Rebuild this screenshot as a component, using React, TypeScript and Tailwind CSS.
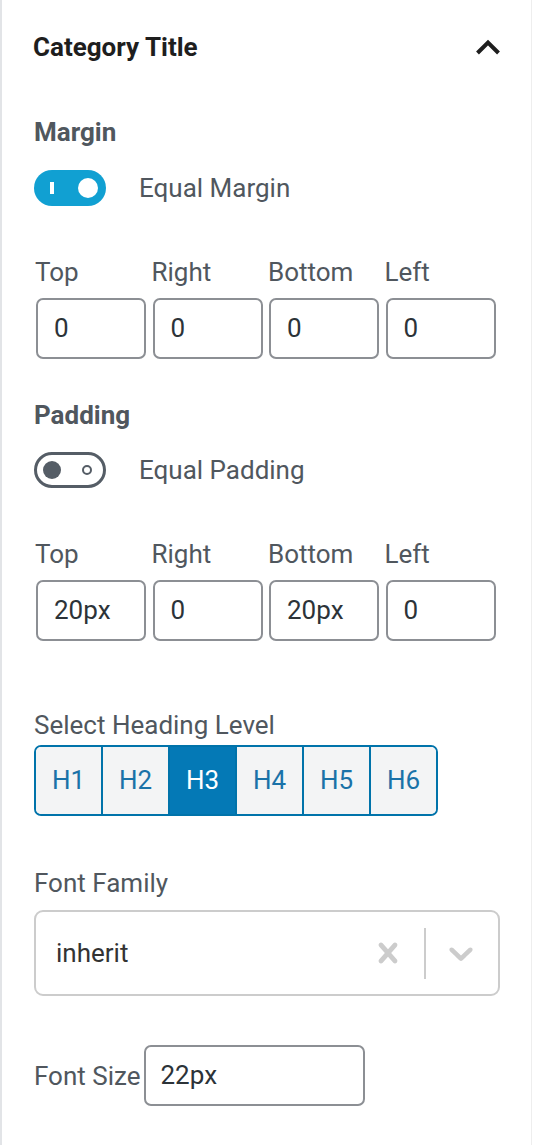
import React from "react";

const font = { fontFamily: "Roboto, 'Liberation Sans', sans-serif" };

function Field({ value }: { value: string }) {
  return (
    <div className="w-[110px] h-[61px] border-2 border-[#8c8f94] rounded-[7px] flex items-center pl-[16px] text-[26px] text-[#2c3338]">
      {value}
    </div>
  );
}

function Sides({ values }: { values: string[] }) {
  const labels = ["Top", "Right", "Bottom", "Left"];
  return (
    <div className="flex gap-[6.5px] pl-[2px]">
      {labels.map((l, i) => (
        <div key={l} className="flex flex-col">
          <div className="h-[32px] leading-[32px] text-[26px] text-[#50575e] -ml-[1px]">{l}</div>
          <div className="mt-[10px]">
            <Field value={values[i]} />
          </div>
        </div>
      ))}
    </div>
  );
}

export default function App() {
  const levels = ["H1", "H2", "H3", "H4", "H5", "H6"];
  return (
    <div style={font} className="w-[534px] h-[1145px] bg-white flex">
      <div className="w-[2px] bg-[#e2e4e7]" />
      <div className="w-[529px] pl-[32px] pr-[31px] flex flex-col">
        {/* Title */}
        <div className="mt-[31px] h-[32px] flex items-center justify-between">
          <div className="text-[26px] leading-[32px] font-bold text-[#1e1e1e] -ml-[1px]">Category Title</div>
          <svg width="26" height="18" viewBox="0 0 26 18" className="-mr-[1px]">
            <polyline points="2.5,15 13,4.5 23.5,15" fill="none" stroke="#1e1e1e" strokeWidth="4" />
          </svg>
        </div>

        {/* Margin */}
        <div className="mt-[53px] h-[32px] leading-[32px] text-[26px] font-bold text-[#50575e]">Margin</div>
        <div className="mt-[22px] flex items-center h-[36px]">
          <div className="relative w-[72px] h-[36px] rounded-full bg-[#11a0d2]">
            <div className="absolute left-[16px] top-[12px] w-[4px] h-[12px] bg-white" />
            <div className="absolute left-[44px] top-[8px] w-[20px] h-[20px] rounded-full bg-white" />
          </div>
          <div className="ml-[33px] text-[26px] leading-[32px] text-[#50575e]">Equal Margin</div>
        </div>

        <div className="mt-[50px]">
          <Sides values={["0", "0", "0", "0"]} />
        </div>

        {/* Padding */}
        <div className="mt-[40px] h-[32px] leading-[32px] text-[26px] font-bold text-[#50575e]">Padding</div>
        <div className="mt-[21px] flex items-center h-[36px]">
          <div className="relative w-[72px] h-[36px] rounded-full border-[3px] border-[#555d66] bg-white">
            <div className="absolute left-[6px] top-[6px] w-[18px] h-[18px] rounded-full bg-[#555d66]" />
            <div className="absolute left-[45px] top-[10px] w-[10px] h-[10px] rounded-full border-2 border-[#555d66]" />
          </div>
          <div className="ml-[33px] text-[26px] leading-[32px] text-[#50575e]">Equal Padding</div>
        </div>

        <div className="mt-[50px]">
          <Sides values={["20px", "0", "20px", "0"]} />
        </div>

        {/* Heading level */}
        <div className="mt-[68px] h-[32px] leading-[32px] text-[26px] text-[#50575e]">Select Heading Level</div>
        <div className="mt-[4px] w-[404px] h-[71px] flex border-2 border-[#0073aa] rounded-[7px] overflow-hidden">
          {levels.map((h, i) => (
            <div
              key={h}
              className={
                "flex-1 flex items-center justify-center text-[26px] " +
                (i > 0 ? "border-l-2 border-[#0073aa] " : "") +
                (h === "H3" ? "bg-[#0479b6] text-white" : "bg-[#f3f4f5] text-[#1a72a8]")
              }
            >
              {h}
            </div>
          ))}
        </div>

        {/* Font family */}
        <div className="mt-[51px] h-[32px] leading-[32px] text-[26px] text-[#50575e]">Font Family</div>
        <div className="mt-[11px] w-[466px] h-[86px] border-2 border-[#cccccc] rounded-[9px] flex items-center">
          <div className="flex-1 pl-[20px] text-[26px] text-[#333333]">inherit</div>
          <svg width="40" height="40" viewBox="0 0 20 20" className="mr-[16px]">
            <path
              fill="#cccccc"
              d="M14.348 14.849c-0.469 0.469-1.229 0.469-1.697 0l-2.651-3.030-2.651 3.029c-0.469 0.469-1.229 0.469-1.697 0-0.469-0.469-0.469-1.229 0-1.697l2.758-3.15-2.759-3.152c-0.469-0.469-0.469-1.228 0-1.697s1.228-0.469 1.697 0l2.652 3.031 2.651-3.031c0.469-0.469 1.228-0.469 1.697 0s0.469 1.229 0 1.697l-2.758 3.152 2.758 3.15c0.469 0.469 0.469 1.229 0 1.698z"
            />
          </svg>
          <div className="w-[2px] h-[51px] bg-[#cccccc]" />
          <svg width="40" height="40" viewBox="0 0 20 20" className="ml-[15px] mr-[17px]">
            <path
              fill="#cccccc"
              d="M4.516 7.548c0.436-0.446 1.043-0.481 1.576 0l3.908 3.747 3.908-3.747c0.533-0.481 1.141-0.446 1.574 0 0.436 0.445 0.408 1.197 0 1.615-0.406 0.418-4.695 4.502-4.695 4.502-0.217 0.223-0.502 0.335-0.787 0.335s-0.57-0.112-0.789-0.335c0 0-4.287-4.084-4.695-4.502s-0.436-1.17 0-1.615z"
            />
          </svg>
        </div>

        {/* Font size */}
        <div className="mt-[49px] flex items-center">
          <div className="text-[26px] leading-[32px] text-[#50575e]">Font Size</div>
          <div className="ml-[3px] w-[221px] h-[61px] border-2 border-[#8c8f94] rounded-[7px] flex items-center pl-[15px] text-[26px] text-[#2c3338]">
            22px
          </div>
        </div>
      </div>
      <div className="w-[1px] bg-[#eeeeee]" />
    </div>
  );
}
